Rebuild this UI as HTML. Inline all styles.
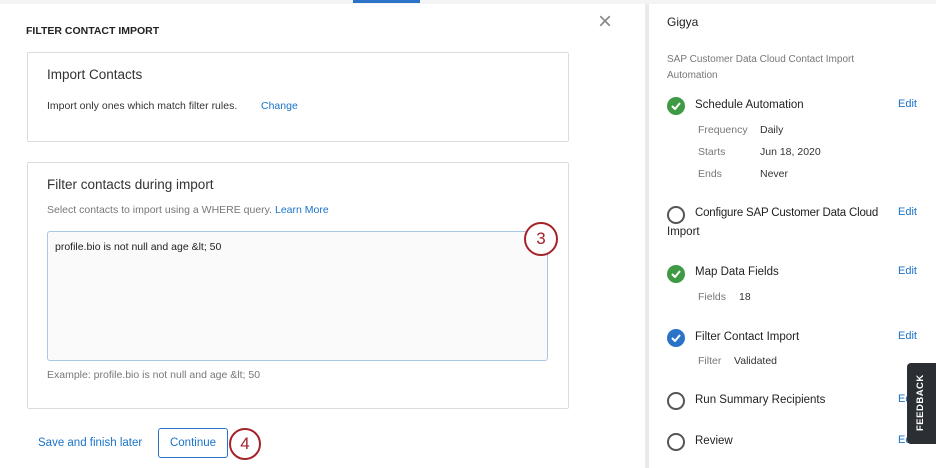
<!DOCTYPE html>
<html><head><style>
*{margin:0;padding:0;box-sizing:border-box}
body{width:936px;height:468px;overflow:hidden;background:#fff;font-family:"Liberation Sans",sans-serif;position:relative;color:#333}
.a{position:absolute;white-space:nowrap}
.box{position:absolute;border:1px solid #dcdcdc;border-radius:2px;background:#fff}
.blue{color:#1a73c8}
.lbl{color:#777}
.circ{position:absolute;width:18px;height:18px;border-radius:50%}
.g{background:#3f9a45}.b{background:#2a73c9}
.o{border:2px solid #555}
.circ svg{position:absolute;left:4px;top:5px}
.red{position:absolute;border:2.5px solid #a5222a;border-radius:50%;color:#a5222a;font-size:17px;text-align:center;background:#fff}
</style></head><body>
<div class="a" style="left:0;top:0;width:936px;height:4px;background:#f4f4f4"></div>
<div class="a" style="left:353px;top:0;width:67px;height:3px;background:#2a73c9"></div>
<div class="a" style="left:645px;top:4px;width:4px;height:464px;background:#eaeaea"></div>

<div class="a" style="left:26px;top:25px;font-size:10.5px;font-weight:bold;color:#222">FILTER CONTACT IMPORT</div>
<div class="a" style="left:598px;top:8px;font-size:24px;color:#888;font-weight:300">×</div>

<div class="box" style="left:27px;top:52px;width:542px;height:90px"></div>
<div class="a" style="left:47px;top:67px;font-size:13.5px;color:#333">Import Contacts</div>
<div class="a" style="left:47px;top:100px;font-size:10.5px">Import only ones which match filter rules.</div>
<div class="a blue" style="left:261px;top:100px;font-size:10.5px">Change</div>

<div class="box" style="left:27px;top:162px;width:542px;height:247px"></div>
<div class="a" style="left:47px;top:177px;font-size:13.5px">Filter contacts during import</div>
<div class="a" style="left:47px;top:204px;font-size:10.5px;color:#777">Select contacts to import using a WHERE query. <span class="blue">Learn More</span></div>
<div class="a" style="left:47px;top:231px;width:501px;height:130px;border:1px solid #a9c6e8;border-radius:3px;background:#fafafa"></div>
<div class="a" style="left:55px;top:241px;font-size:10.5px;color:#222">profile.bio is not null and age &amp;lt; 50</div>
<div class="a" style="left:47px;top:369px;font-size:10.5px;color:#777">Example: profile.bio is not null and age &amp;lt; 50</div>
<div class="red" style="left:524px;top:222px;width:34px;height:34px;line-height:29px">3</div>

<div class="a blue" style="left:38px;top:437px;font-size:11.5px">Save and finish later</div>
<div class="a blue" style="left:158px;top:428px;width:70px;height:30px;border:1px solid #2a73c9;border-radius:3px;font-size:11.5px;text-align:center;line-height:28px">Continue</div>
<div class="red" style="left:229px;top:428px;width:32px;height:32px;line-height:27px">4</div>

<div class="a" style="left:667px;top:15px;font-size:12px;color:#222">Gigya</div>
<div class="a" style="left:667px;top:52px;font-size:10px;color:#777;line-height:16px;white-space:normal;width:220px">SAP Customer Data Cloud Contact Import Automation</div>

<div class="circ g" style="left:667px;top:97px"><svg width="10" height="8"><path d="M1 4l3 3 5-6" stroke="#fff" stroke-width="2" fill="none"/></svg></div>
<div class="a" style="left:695px;top:99px;font-size:11.5px;color:#222">Schedule Automation</div>
<div class="a blue" style="left:898px;top:98px;font-size:11px">Edit</div>
<div class="a lbl" style="left:698px;top:124px;font-size:10.5px">Frequency</div><div class="a" style="left:760px;top:124px;font-size:10.5px">Daily</div>
<div class="a lbl" style="left:698px;top:146px;font-size:10.5px">Starts</div><div class="a" style="left:760px;top:146px;font-size:10.5px">Jun 18, 2020</div>
<div class="a lbl" style="left:698px;top:168px;font-size:10.5px">Ends</div><div class="a" style="left:760px;top:168px;font-size:10.5px">Never</div>

<div class="circ o" style="left:667px;top:206px"></div>
<div class="a" style="left:695px;top:207px;font-size:11.5px;color:#222;letter-spacing:-0.2px">Configure SAP Customer Data Cloud</div>
<div class="a" style="left:667px;top:226px;font-size:11.5px;color:#222">Import</div>
<div class="a blue" style="left:898px;top:206px;font-size:11px">Edit</div>

<div class="circ g" style="left:667px;top:265px"><svg width="10" height="8"><path d="M1 4l3 3 5-6" stroke="#fff" stroke-width="2" fill="none"/></svg></div>
<div class="a" style="left:695px;top:266px;font-size:11.5px;color:#222">Map Data Fields</div>
<div class="a blue" style="left:898px;top:265px;font-size:11px">Edit</div>
<div class="a lbl" style="left:698px;top:291px;font-size:10.5px">Fields</div><div class="a" style="left:739px;top:291px;font-size:10.5px">18</div>

<div class="circ b" style="left:667px;top:329px"><svg width="10" height="8"><path d="M1 4l3 3 5-6" stroke="#fff" stroke-width="2" fill="none"/></svg></div>
<div class="a" style="left:695px;top:331px;font-size:11.5px;color:#222">Filter Contact Import</div>
<div class="a blue" style="left:898px;top:330px;font-size:11px">Edit</div>
<div class="a lbl" style="left:698px;top:355px;font-size:10.5px">Filter</div><div class="a" style="left:734px;top:355px;font-size:10.5px">Validated</div>

<div class="circ o" style="left:667px;top:392px"></div>
<div class="a" style="left:695px;top:394px;font-size:11.5px;color:#222">Run Summary Recipients</div>
<div class="a blue" style="left:898px;top:393px;font-size:11px">Ed</div>
<div class="circ o" style="left:667px;top:433px"></div>
<div class="a" style="left:695px;top:435px;font-size:11.5px;color:#222">Review</div>
<div class="a blue" style="left:898px;top:434px;font-size:11px">Ed</div>

<div class="a" style="left:907px;top:363px;width:29px;height:81px;background:#2b2f33;border-radius:4px 0 0 4px"></div>
<div class="a" style="left:914px;top:431px;transform:rotate(-90deg);transform-origin:0 0;color:#fff;font-size:9.5px;font-weight:bold;letter-spacing:.5px;line-height:14px">FEEDBACK</div>
</body></html>
